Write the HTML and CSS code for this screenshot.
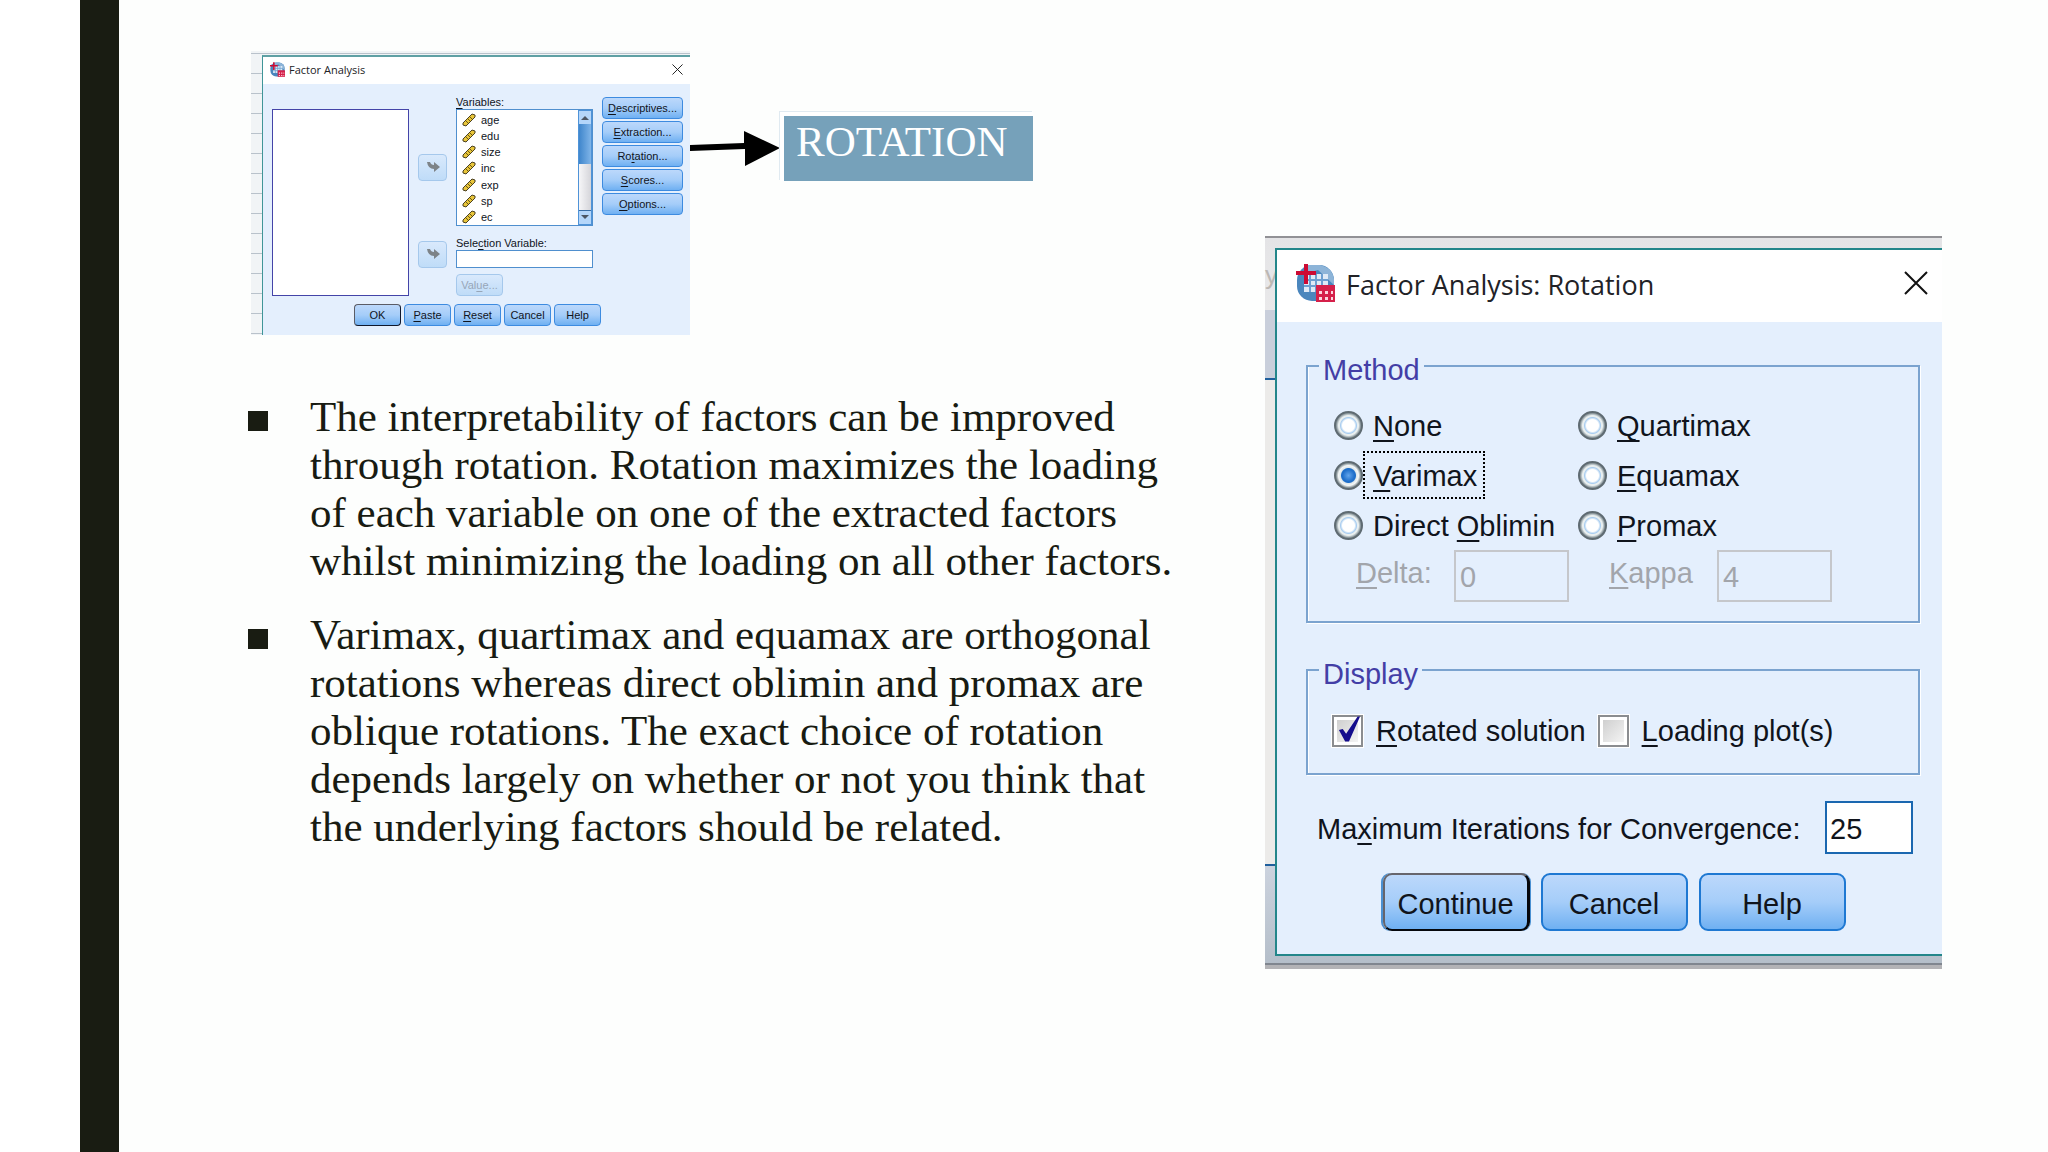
FILE: index.html
```html
<!DOCTYPE html>
<html lang="en">

<head>
    <meta charset="UTF-8">
    <meta name="viewport" content="width=device-width, initial-scale=1.0">
    <title>Factor Analysis: Rotation</title>
    <link rel="stylesheet" href="styles.css">
</head>

<body>

<!-- Shared drawings -->
<svg class="defs" aria-hidden="true">
    <symbol id="appIcon" viewBox="0 0 39 38">
        <rect x="1" y="1" width="37" height="36" rx="15" fill="#4a86bd"/>
        <path d="M12 1h12q12 2 14 14v6L22 6 8 10z" fill="#8db4d8"/>
        <path d="M8 10h24v18H8z" fill="#dfeaf6"/>
        <path d="M8 16h24M8 22h24M14 10v18M20 10v18M26 10v18" stroke="#6d9fd0" stroke-width="2"/>
        <path d="M20 21h19v17H20z" fill="#d5204a"/>
        <path d="M23 27h3v3h-3zM29 27h3v3h-3zM35 27h2v3h-2zM23 33h3v3h-3zM29 33h3v3h-3zM35 33h2v3h-2z" fill="#fbd5de"/>
        <path d="M8 0h4v7h8v4h-8v9H8v-9H0V7h8z" fill="#cc0a33"/>
    </symbol>
    <symbol id="closeIcon" viewBox="0 0 24 24">
        <path d="M1 1l22 22M23 1L1 23" stroke="#111" stroke-width="2" fill="none"/>
    </symbol>
    <symbol id="ruler" viewBox="0 0 14 14">
        <path d="M1 10L10 1l3 1v2L4 13l-3-1z" fill="#e8c53a" stroke="#4a4020" stroke-width="1"/>
        <path d="M4 8l2 2M6 6l2 2M8 4l2 2" stroke="#6b5a18" stroke-width="1"/>
    </symbol>
    <symbol id="moveArrow" viewBox="0 0 14 12">
        <path d="M1 1l3 0q1 3 4 3V1l6 5-6 5V8Q2 8 1 1z" fill="#7d8388"/>
    </symbol>
</svg>

<div class="slide">
    <div class="side-bar"></div>

    <main class="content">

        <!-- Left column -->
        <div class="left-col">
            <div class="top-row">

                <!-- Factor Analysis window -->
                <div class="sheet">
                    <section class="window small">
                        <header class="title-bar">
                            <svg class="app-icon"><use href="#appIcon"/></svg>
                            <h2>Factor Analysis</h2>
                            <button class="close" aria-label="Close"><svg><use href="#closeIcon"/></svg></button>
                        </header>
                        <div class="window-body">
                            <div class="columns">
                                <div class="source-list"></div>
                                <div class="move-col">
                                    <button class="btn off" disabled aria-label="Move to variables"><svg><use href="#moveArrow"/></svg></button>
                                    <button class="btn off" disabled aria-label="Move to selection"><svg><use href="#moveArrow"/></svg></button>
                                </div>
                                <div class="var-col">
                                    <p class="caption"><u>V</u>ariables:</p>
                                    <div class="var-box">
                                        <ul class="var-list">
                                            <li><svg><use href="#ruler"/></svg>age</li>
                                            <li><svg><use href="#ruler"/></svg>edu</li>
                                            <li><svg><use href="#ruler"/></svg>size</li>
                                            <li><svg><use href="#ruler"/></svg>inc</li>
                                            <li><svg><use href="#ruler"/></svg>exp</li>
                                            <li><svg><use href="#ruler"/></svg>sp</li>
                                            <li><svg><use href="#ruler"/></svg>ec</li>
                                        </ul>
                                        <div class="scroll">
                                            <span class="scroll-end"><svg viewBox="0 0 8 5"><path d="M0 5l4-4 4 4z" fill="#4c5664"/></svg></span>
                                            <span class="scroll-thumb"></span>
                                            <span class="scroll-track"></span>
                                            <span class="scroll-end"><svg viewBox="0 0 8 5"><path d="M0 0l4 4 4-4z" fill="#4c5664"/></svg></span>
                                        </div>
                                    </div>
                                    <label class="caption" for="selVar">Sele<u>c</u>tion Variable:</label>
                                    <input type="text" id="selVar">
                                    <button class="btn off value" disabled>Val<u>u</u>e...</button>
                                </div>
                                <div class="option-col">
                                    <button class="btn"><u>D</u>escriptives...</button>
                                    <button class="btn"><u>E</u>xtraction...</button>
                                    <button class="btn">Ro<u>t</u>ation...</button>
                                    <button class="btn"><u>S</u>cores...</button>
                                    <button class="btn"><u>O</u>ptions...</button>
                                </div>
                            </div>
                            <div class="btn-row">
                                <button class="btn default">OK</button>
                                <button class="btn"><u>P</u>aste</button>
                                <button class="btn"><u>R</u>eset</button>
                                <button class="btn">Cancel</button>
                                <button class="btn">Help</button>
                            </div>
                        </div>
                    </section>
                </div>

                <svg class="pointer" viewBox="0 0 90 36" aria-hidden="true">
                    <path d="M0 14L54 12V0L90 17 55 35V18L0 20z" fill="#000"/>
                </svg>
                <h1 class="tag">ROTATION</h1>
            </div>

            <ul class="notes">
                <li>The interpretability of factors can be improved through rotation. Rotation maximizes the loading of each variable on one of the extracted factors whilst minimizing the loading on all other factors.</li>
                <li>Varimax, quartimax and equamax are orthogonal rotations whereas direct oblimin and promax are oblique rotations. The exact choice of rotation depends largely on whether or not you think that the underlying factors should be related.</li>
            </ul>
        </div>

        <!-- Rotation window -->
        <div class="backdrop">
            <span class="behind" aria-hidden="true">y</span>
            <section class="window large">
                <header class="title-bar">
                    <svg class="app-icon"><use href="#appIcon"/></svg>
                    <h2>Factor Analysis: Rotation</h2>
                    <button class="close" aria-label="Close"><svg><use href="#closeIcon"/></svg></button>
                </header>
                <form class="window-body">
                    <fieldset class="method">
                        <legend>Method</legend>
                        <div class="choices">
                            <label class="choice"><input type="radio" name="method"><span><u>N</u>one</span></label>
                            <label class="choice"><input type="radio" name="method"><span><u>Q</u>uartimax</span></label>
                            <label class="choice"><input type="radio" name="method" checked><span class="focused"><u>V</u>arimax</span></label>
                            <label class="choice"><input type="radio" name="method"><span><u>E</u>quamax</span></label>
                            <label class="choice"><input type="radio" name="method"><span>Direct <u>O</u>blimin</span></label>
                            <label class="choice"><input type="radio" name="method"><span><u>P</u>romax</span></label>
                            <div class="param">
                                <label for="delta"><u>D</u>elta:</label>
                                <input type="text" id="delta" value="0" disabled>
                            </div>
                            <div class="param kappa">
                                <label for="kappa"><u>K</u>appa</label>
                                <input type="text" id="kappa" value="4" disabled>
                            </div>
                        </div>
                    </fieldset>

                    <fieldset class="display">
                        <legend>Display</legend>
                        <div class="checks">
                            <label class="check"><input type="checkbox" checked><span><u>R</u>otated solution</span></label>
                            <label class="check"><input type="checkbox"><span><u>L</u>oading plot(s)</span></label>
                        </div>
                    </fieldset>

                    <div class="iterations">
                        <label for="maxIter">Ma<u>x</u>imum Iterations for Convergence:</label>
                        <input type="text" id="maxIter" value="25">
                    </div>

                    <div class="btn-row">
                        <button type="button" class="btn default">Continue</button>
                        <button type="button" class="btn">Cancel</button>
                        <button type="button" class="btn">Help</button>
                    </div>
                </form>
            </section>
        </div>

    </main>
</div>

</body>
</html>
```
FILE: styles.css
```css
/* General Styles */
* {
    box-sizing: border-box;
}

body {
    margin: 0;
    font-family: "Liberation Serif", "Times New Roman", serif;
    color: #181b12;
    background-color: #fff;
}

h1, h2, p, ul {
    margin: 0;
    padding: 0;
    font-weight: normal;
}

ul {
    list-style: none;
}

.defs {
    display: none;
}

/* Slide */
.slide {
    display: flex;
    min-height: 100vh;
    padding-left: 80px;
}

.side-bar {
    width: 39px;
    background-color: #191c12;
}

.content {
    flex: 1;
    display: grid;
    grid-template-columns: minmax(0, 1fr) 677px;
    column-gap: 90px;
    align-items: start;
    padding: 51px 106px 40px 129px;
    background-color: #fdfefd;
}

.top-row {
    display: flex;
    align-items: flex-start;
    padding-left: 3px;
}

.pointer {
    flex: none;
    width: 90px;
    height: 36px;
    margin-top: 80px;
}

.tag {
    flex: none;
    width: 253px;
    height: 69px;
    margin-top: 61px;
    padding-left: 12px;
    border: solid #fff;
    border-width: 4px 0 0 4px;
    box-shadow: -1px -1px #e0eaf1;
    background-color: #76a1ba;
    color: #fff;
    font-size: 43px;
    line-height: 52px;
}

/* Bullet points */
.notes {
    margin-top: 58px;
    font-size: 43px;
    line-height: 48px;
}

.notes li {
    display: flex;
    gap: 42px;
    margin-bottom: 26px;
}

.notes li::before {
    content: "";
    flex: none;
    width: 20px;
    height: 20px;
    margin-top: 18px;
    background-color: #191c12;
}

/* Windows */
.window {
    font-family: "Liberation Sans", Arial, sans-serif;
    color: #10141c;
    background-color: #e4effd;
}

.window u {
    text-decoration-thickness: 1px;
    text-underline-offset: 2px;
    text-decoration-skip-ink: none;
}

.window input,
.window button {
    font: inherit;
    color: inherit;
}

.title-bar {
    display: flex;
    align-items: center;
    background-color: #fff;
}

.title-bar h2 {
    flex: 1;
    font-family: "Open Sans", "Segoe UI", sans-serif;
    color: #222226;
}

.close {
    padding: 0;
    border: none;
    background: none;
}

.close svg {
    display: block;
    width: 100%;
    height: 100%;
}

.btn {
    padding: 0;
    border: 1px solid #3d8be0;
    border-radius: 4px;
    background: linear-gradient(#bcd8fb, #a5cdf9 50%, #6fb0f2);
    white-space: nowrap;
}

.btn.default {
    border-color: #5a5c66 #10182c #10182c #5a5c66;
}

.window .btn.off {
    border-color: #a5c8ec;
    background: linear-gradient(#d9e9fc, #bfdcf8);
    color: #97a6b8;
}

.btn-row {
    display: flex;
    justify-content: center;
}

/* Factor Analysis window */
.sheet {
    flex: none;
    width: 439px;
    padding: 4px 0 0 11px;
    background: repeating-linear-gradient(#f1f4f6 0, #f1f4f6 2px, #b9c2cb 2px, #b9c2cb 3px, #f1f4f6 3px, #f1f4f6 20px);
}

.small {
    border-top: 2px solid #5fa0a4;
    border-left: 1px solid #3f9598;
    font-size: 11px;
    line-height: 12px;
}

.small .title-bar {
    height: 27px;
    padding: 0 7px 2px;
}

.small .app-icon {
    width: 15px;
    height: 15px;
}

.small h2 {
    padding-left: 4px;
    font-size: 11px;
}

.small .close {
    width: 11px;
    height: 11px;
}

.small .window-body {
    padding: 13px 7px 9px 9px;
}

.columns {
    display: flex;
    gap: 9px;
}

.source-list {
    width: 137px;
    margin-top: 12px;
    border: 1px solid #4444a8;
    background-color: #fff;
}

.move-col {
    display: flex;
    flex-direction: column;
    gap: 60px;
    width: 29px;
    padding-top: 57px;
}

.move-col .btn {
    height: 27px;
}

.move-col svg {
    width: 14px;
    height: 12px;
}

.var-col {
    display: flex;
    flex-direction: column;
    width: 137px;
}

.caption {
    padding-bottom: 2px;
    line-height: 10px;
}

.var-box {
    display: flex;
    height: 117px;
    margin-bottom: 12px;
    border: 1px solid #4f8fce;
    background-color: #fff;
}

.var-list {
    flex: 1;
    display: flex;
    flex-direction: column;
    padding: 2px 0 0 5px;
}

.var-list li {
    flex: 1;
    display: flex;
    align-items: center;
    gap: 5px;
}

.var-list svg {
    width: 14px;
    height: 14px;
}

.scroll {
    display: flex;
    flex-direction: column;
    width: 14px;
    border: 1px solid #4f93d8;
}

.scroll-end {
    display: flex;
    align-items: center;
    justify-content: center;
    height: 13px;
    background-color: #b4d6fa;
}

.scroll-end svg {
    width: 8px;
    height: 5px;
}

.scroll-thumb {
    height: 40px;
    background: linear-gradient(90deg, #3f86cc, #7fb4e8);
}

.scroll-track {
    flex: 1;
    border-bottom: 1px solid #3a6ea5;
    background: linear-gradient(90deg, #f6f6f8, #d5d5da);
}

.var-col input {
    height: 18px;
    border: 1px solid #4f8fce;
    background-color: #fff;
}

.value {
    width: 47px;
    height: 22px;
    margin-top: 6px;
}

.option-col {
    display: flex;
    flex-direction: column;
    gap: 2px;
    flex: 1;
}

.option-col .btn {
    height: 22px;
}

.small .btn-row {
    gap: 3px;
    margin-top: 8px;
}

.small .btn-row .btn {
    width: 47px;
    height: 22px;
}

/* Rotation window */
.backdrop {
    position: relative;
    margin-top: 185px;
    padding: 10px 0 9px 10px;
    border-top: 2px solid #919195;
    border-bottom: 4px solid #b3b3b6;
    box-shadow: inset 0 -2px #80868f;
    background: linear-gradient(#e4e4e6 0, #e9e9ea 72px, #c9cfdb 72px, #c9cfdb 140px, #1f5f9c 140px, #1f5f9c 142px, #ecebe9 142px, #ecebe9 626px, #1f5f9c 626px, #1f5f9c 628px, #ccd3de 628px, #b4bec9);
}

/* Letter half hidden by the window */
.behind {
    position: absolute;
    top: 22px;
    left: 0;
    font-family: "Liberation Sans", Arial, sans-serif;
    font-size: 26px;
    color: #bcb8b4;
}

.large {
    position: relative;
    border: 2px solid #23868a;
    border-right: none;
    font-size: 29px;
    line-height: 32px;
}

.large u {
    text-decoration-thickness: 2px;
    text-underline-offset: 4px;
}

.large .title-bar {
    height: 72px;
    padding: 0 14px 6px 19px;
}

.large .app-icon {
    width: 39px;
    height: 38px;
}

.large h2 {
    padding: 4px 0 0 11px;
    font-size: 27px;
}

.large .close {
    width: 24px;
    height: 24px;
}

.large .window-body {
    padding: 24px 22px 23px 29px;
}

.large fieldset {
    margin: 0;
    border: 2px solid #7ba3cf;
    box-shadow: inset 1px 0 #fff, 1px 1px #fff;
}

.large legend {
    margin-left: -15px;
    padding: 8px 4px 0;
    color: #433ea6;
}

.method {
    padding: 14px 0 19px 26px;
}

.choices {
    display: grid;
    grid-template-columns: 244px 1fr;
    grid-template-rows: 50px 50px 50px 52px;
}

.choice {
    display: flex;
    align-items: center;
    white-space: nowrap;
}

.choice input {
    appearance: none;
    flex: none;
    width: 29px;
    height: 29px;
    margin: 0;
    border: 2px solid #5f6b72;
    border-radius: 50%;
    background: radial-gradient(circle, #fff 0, #fff 6px, #a9cdf0 8px, #e9eff0 9px, #e9eff0 10px, #8f9ba0 12px);
}

.choice input:checked {
    background: radial-gradient(circle, #62a5ec 0, #1f6fca 6px, #1f6fca 7px, #dfe8ec 8px, #f3f6f6 10px, #8f9ba0 12px);
}

.choice span {
    padding: 4px 6px 2px 8px;
    border: 2px dotted transparent;
    line-height: 38px;
}

.choice .focused {
    border-color: #000;
}

.param {
    display: flex;
    color: #a2a5ab;
}

.param label {
    width: 120px;
    padding: 7px 0 0 22px;
}

.kappa label {
    width: 139px;
    padding-left: 31px;
}

.window .param input {
    width: 115px;
    padding: 2px 4px 0;
    border: 2px solid #c5c7cb;
    background: none;
}

.large .display {
    margin-top: 27px;
    padding: 25px 0 26px 24px;
}

.large .display legend {
    margin-left: -13px;
}

.checks {
    display: flex;
    gap: 12px;
    white-space: nowrap;
}

.check {
    display: flex;
    align-items: center;
    gap: 13px;
}

.check input {
    appearance: none;
    flex: none;
    width: 31px;
    height: 32px;
    margin: 0;
    padding: 3px;
    border: 2px solid #8b8d90;
    outline: 1px solid #fff;
    background: linear-gradient(135deg, #cfcfcf, #f4f4f4) content-box, #fff;
}

/* Tick */
.check input:checked::before {
    content: "";
    display: block;
    width: 24px;
    height: 26px;
    margin-top: -4px;
    background-color: #150d8c;
    clip-path: polygon(8% 54%, 24% 50%, 38% 68%, 86% 2%, 96% 2%, 50% 98%, 34% 98%);
}

.iterations {
    display: flex;
    align-items: center;
    justify-content: space-between;
    margin-top: 26px;
    padding: 0 7px 0 11px;
}

.iterations label {
    padding-top: 3px;
    white-space: nowrap;
}

.iterations input {
    width: 88px;
    height: 53px;
    padding: 3px 3px 0;
    border: 2px solid #1a67b0;
    background-color: #fff;
}

.large .btn-row {
    gap: 11px;
    margin-top: 19px;
    padding-left: 2px;
}

.large .btn {
    width: 147px;
    height: 58px;
    padding-top: 3px;
    border: 2px solid #1e78d2;
    border-radius: 9px;
}

.large .btn.default {
    border-color: #66656c #05070c #05070c #66656c;
    border-right-width: 3px;
    box-shadow: -2px 0 #4a90d2, 1px 0 #4a90d2;
}
```
